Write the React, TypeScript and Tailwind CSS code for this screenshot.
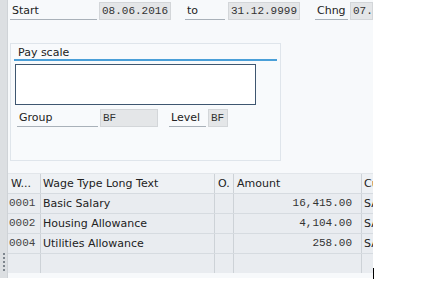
import React from "react";

const sans = { fontFamily: '"DejaVu Sans", Verdana, sans-serif' };
const mono = { fontFamily: '"Liberation Mono", "Courier New", monospace' };

function Label({ text, w, ml = 0 }: { text: string; w: number; ml?: number }) {
  return (
    <div
      className="shrink-0 h-[18px] border-b border-[#a9b1b9] text-[11px] leading-[18px] text-[#222] pl-[2px]"
      style={{ width: w, marginLeft: ml, ...sans }}
    >
      {text}
    </div>
  );
}

function Field({ text, w, ml = 0 }: { text: string; w: number; ml?: number }) {
  return (
    <div
      className="shrink-0 h-[18px] bg-[#e4e6e8] border border-[#d3d6d9] text-[11px] leading-[16px] text-[#333] pl-[2px] overflow-hidden whitespace-nowrap"
      style={{ width: w, marginLeft: ml, ...mono }}
    >
      {text}
    </div>
  );
}

const rows = [
  ["0001", "Basic Salary", "16,415.00"],
  ["0002", "Housing Allowance", "4,104.00"],
  ["0004", "Utilities Allowance", "258.00"],
  ["", "", ""],
];

export default function App() {
  return (
    <div className="relative w-[447px] h-[308px] bg-white flex overflow-hidden">
      <div className="w-[373px] shrink-0 flex flex-col overflow-hidden">
        <div className="flex h-[278px]">
          {/* left strip */}
          <div className="w-[8px] shrink-0 bg-[#dcdfe2] border-r border-[#cfd3d7] flex flex-col justify-end items-center pb-[7px]">
            <div className="flex flex-col gap-[2px]">
              {[0, 1, 2, 3, 4].map((i) => (
                <div key={i} className="w-[2px] h-[2px] bg-[#7d858d]" />
              ))}
            </div>
          </div>
          <div className="w-[365px] shrink-0 flex flex-col bg-[#f7f9fb] overflow-hidden">
            {/* top row */}
            <div className="flex items-start pt-[2px]">
              <Label text="Start" w={87} ml={2} />
              <Field text="08.06.2016" w={72} ml={2} />
              <Label text="to" w={40} ml={14} />
              <Field text="31.12.9999" w={72} ml={3} />
              <Label text="Chng" w={33} ml={15} />
              <Field text="07." w={23} ml={2} />
            </div>
            {/* pay scale group */}
            <div className="shrink-0 ml-[2px] mt-[23px] w-[271px] h-[118px] border border-[#dfe5eb] bg-[#f8fafc] px-[3px] pt-[1px]">
              <div
                className="h-[16px] border-b-2 border-[#4a9fd8] text-[11px] leading-[15px] text-[#222] pl-[4px]"
                style={sans}
              >
                Pay scale
              </div>
              <div className="mt-[3px] ml-[1px] w-[241px] h-[41px] border border-[#3e5670] bg-white" />
              <div className="flex mt-[4px]">
                <Label text="Group" w={81} ml={3} />
                <Field text="BF" w={58} ml={2} />
                <Label text="Level" w={37} ml={11} />
                <Field text="BF" w={20} ml={2} />
              </div>
            </div>
            {/* table */}
            <div className="mt-[12px] flex flex-col text-[11px] text-[#222]" style={sans}>
              <div className="flex h-[20px] bg-[#eef1f4] border-t border-[#e2e6ea] leading-[19px]">
                <div className="w-[33px] shrink-0 pl-[3px] border-r border-[#cdd2d7]">W...</div>
                <div className="w-[174px] shrink-0 pl-[2px] border-r border-[#cdd2d7]">Wage Type Long Text</div>
                <div className="w-[19px] shrink-0 pl-[3px] border-r border-[#cdd2d7]">O.</div>
                <div className="w-[128px] shrink-0 pl-[3px] border-r border-[#cdd2d7]">Amount</div>
                <div className="w-[11px] shrink-0 pl-[2px] overflow-hidden whitespace-nowrap">Cu</div>
              </div>
              {rows.map((r, i) => (
                <div
                  key={i}
                  className="flex h-[20px] bg-[#e9ecf0] border-t border-[#d6dbe0] leading-[19px]"
                >
                  <div className="w-[33px] shrink-0 pl-[1px] border-r border-[#cdd2d7] text-[#444]" style={mono}>
                    {r[0]}
                  </div>
                  <div className="w-[174px] shrink-0 pl-[2px] border-r border-[#cdd2d7]">{r[1]}</div>
                  <div className="w-[19px] shrink-0 border-r border-[#cdd2d7]" />
                  <div className="w-[128px] shrink-0 pr-[9px] text-right border-r border-[#cdd2d7] text-[#333]" style={mono}>
                    {r[2]}
                  </div>
                  <div className="w-[11px] shrink-0 pl-[2px] overflow-hidden whitespace-nowrap">{r[0] ? "SAR" : ""}</div>
                </div>
              ))}
            </div>
          </div>
        </div>
      </div>
      <div className="absolute left-[373px] top-[268px] w-[1px] h-[11px] bg-black" />
    </div>
  );
}
